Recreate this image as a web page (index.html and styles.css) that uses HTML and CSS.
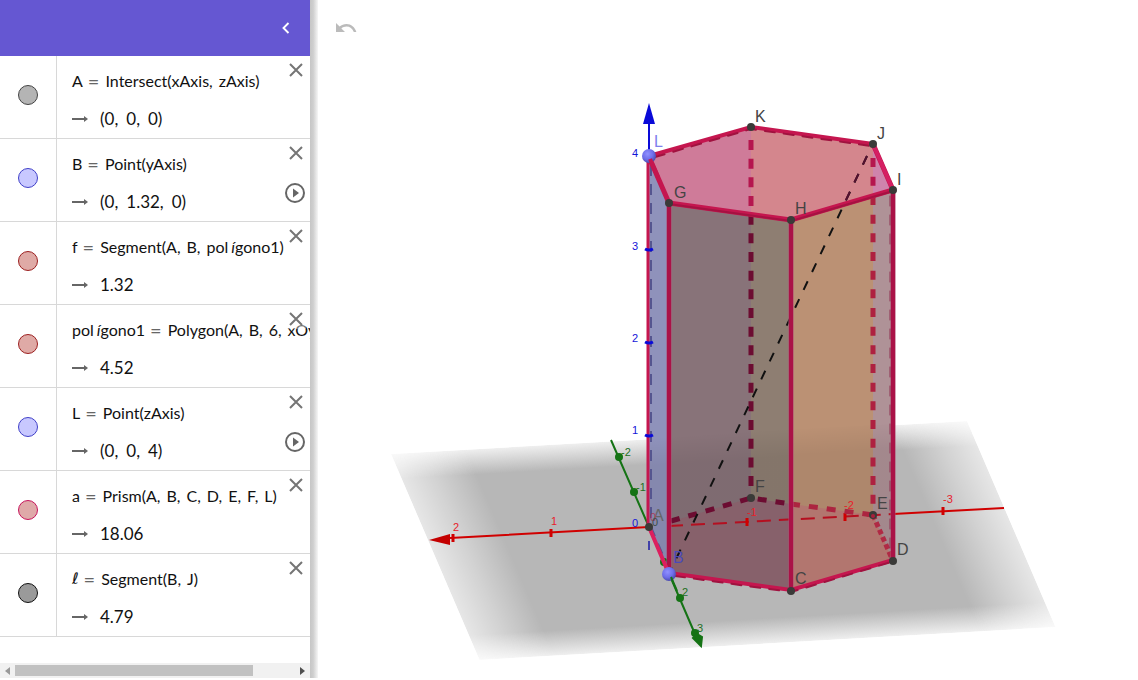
FILE: index.html
```html
<!DOCTYPE html>
<html lang="es">
<head>
<meta charset="utf-8">
<meta name="viewport" content="width=device-width, initial-scale=1">
<title>Prisma hexagonal</title>
<link rel="stylesheet" href="styles.css">
</head>
<body>
<svg class="symbols" aria-hidden="true">
  <symbol id="close" viewBox="0 0 14 14"><path d="M1 1l12 12M13 1L1 13" fill="none" stroke="#757575" stroke-width="2"/></symbol>
  <symbol id="play" viewBox="0 0 20 20"><circle cx="10" cy="10" r="9" fill="none" stroke="#666" stroke-width="2"/><path d="M8 5.500l6 4.500-6 4.500z" fill="#666"/></symbol>
  <symbol id="arrow" viewBox="0 0 16 8"><path d="M0 4h14" stroke="#666" stroke-width="2"/><path d="M12 1l4 3-4 3z" fill="#666"/></symbol>
</svg>
<div class="app">
  <aside class="panel">
    <header class="bar">
      <button class="collapse" aria-label="Cerrar panel"><svg width="8" height="12" viewBox="0 0 8 12"><path d="M6.500 1L1.500 6l5 5" fill="none" stroke="#fff" stroke-width="1.900"/></svg></button>
    </header>
    <ul class="list">
      <li class="row">
        <div class="side"><button class="marble gray" aria-label="A"></button></div>
        <div class="body">
          <div class="def"><span>A</span><span class="eq">=</span><span>Intersect(xAxis,</span><span class="arg">zAxis)</span></div>
          <div class="val"><svg class="arrow"><use href="#arrow"/></svg><span>(0,</span><span class="num">0,</span><span class="num">0)</span></div>
        </div>
        <button class="close" aria-label="Eliminar"><svg width="14" height="14"><use href="#close"/></svg></button>
      </li>
      <li class="row">
        <div class="side"><button class="marble blue" aria-label="B"></button></div>
        <div class="body">
          <div class="def"><span>B</span><span class="eq">=</span><span>Point(yAxis)</span></div>
          <div class="val"><svg class="arrow"><use href="#arrow"/></svg><span>(0,</span><span class="num">1.32,</span><span class="num">0)</span></div>
        </div>
        <button class="close" aria-label="Eliminar"><svg width="14" height="14"><use href="#close"/></svg></button>
        <button class="play" aria-label="Reproducir"><svg width="20" height="20"><use href="#play"/></svg></button>
      </li>
      <li class="row">
        <div class="side"><button class="marble red" aria-label="f"></button></div>
        <div class="body">
          <div class="def"><span>f</span><span class="eq">=</span><span>Segment(A,</span><span class="arg">B,</span><span class="arg">pol</span><i class="accent">í</i><span>gono1)</span></div>
          <div class="val"><svg class="arrow"><use href="#arrow"/></svg><span>1.32</span></div>
        </div>
        <button class="close" aria-label="Eliminar"><svg width="14" height="14"><use href="#close"/></svg></button>
      </li>
      <li class="row">
        <div class="side"><button class="marble red" aria-label="polígono1"></button></div>
        <div class="body">
          <div class="def"><span>pol</span><i class="accent">í</i><span>gono1</span><span class="eq">=</span><span>Polygon(A,</span><span class="arg">B,</span><span class="arg">6,</span><span class="arg">xOy</span></div>
          <div class="val"><svg class="arrow"><use href="#arrow"/></svg><span>4.52</span></div>
        </div>
        <button class="close" aria-label="Eliminar"><svg width="14" height="14"><use href="#close"/></svg></button>
      </li>
      <li class="row">
        <div class="side"><button class="marble blue" aria-label="L"></button></div>
        <div class="body">
          <div class="def"><span>L</span><span class="eq">=</span><span>Point(zAxis)</span></div>
          <div class="val"><svg class="arrow"><use href="#arrow"/></svg><span>(0,</span><span class="num">0,</span><span class="num">4)</span></div>
        </div>
        <button class="close" aria-label="Eliminar"><svg width="14" height="14"><use href="#close"/></svg></button>
        <button class="play" aria-label="Reproducir"><svg width="20" height="20"><use href="#play"/></svg></button>
      </li>
      <li class="row">
        <div class="side"><button class="marble pink" aria-label="a"></button></div>
        <div class="body">
          <div class="def"><span>a</span><span class="eq">=</span><span>Prism(A,</span><span class="arg">B,</span><span class="arg">C,</span><span class="arg">D,</span><span class="arg">E,</span><span class="arg">F,</span><span class="arg">L)</span></div>
          <div class="val"><svg class="arrow"><use href="#arrow"/></svg><span>18.06</span></div>
        </div>
        <button class="close" aria-label="Eliminar"><svg width="14" height="14"><use href="#close"/></svg></button>
      </li>
      <li class="row">
        <div class="side"><button class="marble dark" aria-label="ℓ"></button></div>
        <div class="body">
          <div class="def"><span class="ell">ℓ</span><span class="eq">=</span><span>Segment(B,</span><span class="arg">J)</span></div>
          <div class="val"><svg class="arrow"><use href="#arrow"/></svg><span>4.79</span></div>
        </div>
        <button class="close" aria-label="Eliminar"><svg width="14" height="14"><use href="#close"/></svg></button>
      </li>
    </ul>
    <div class="scroll">
      <button class="step" aria-label="Izquierda"><svg width="5" height="8" viewBox="0 0 5 8"><path d="M5 0v8L0 4z" fill="#999"/></svg></button>
      <div class="track"><div class="thumb"></div></div>
      <button class="step" aria-label="Derecha"><svg width="5" height="8" viewBox="0 0 5 8"><path d="M0 0v8l5-4z" fill="#505050"/></svg></button>
    </div>
  </aside>
  <div class="divider"></div>
  <main class="view">
    <button class="undo" aria-label="Deshacer"><svg width="24" height="24" viewBox="0 0 24 24"><path d="M12.500 8c-2.650 0-5.050.990-6.900 2.600L2 7v9h9l-3.620-3.620c1.390-1.160 3.160-1.880 5.120-1.880 3.300 0 6.100 2 7.300 5.500h2.600C20.900 11.030 17.150 8 12.500 8z" fill="#bbb"/></svg></button>
    <svg class="scene" viewBox="318 0 820 680" preserveAspectRatio="xMinYMin meet" role="img" aria-label="Prisma hexagonal en 3D">
      <defs>
        <linearGradient id="fx"><stop offset="0" stop-color="#fff" stop-opacity=".34"/><stop offset=".06" stop-color="#fff" stop-opacity=".63"/><stop offset=".13" stop-color="#fff"/><stop offset=".87" stop-color="#fff"/><stop offset=".94" stop-color="#fff" stop-opacity=".63"/><stop offset="1" stop-color="#fff" stop-opacity=".34"/></linearGradient>
        <linearGradient id="fy" x2="0" y2="1"><stop offset="0" stop-color="#b7b7b7" stop-opacity=".22"/><stop offset=".12" stop-color="#b7b7b7"/><stop offset=".88" stop-color="#b7b7b7"/><stop offset="1" stop-color="#b7b7b7" stop-opacity=".22"/></linearGradient>
        <mask id="mx" maskContentUnits="objectBoundingBox"><rect width="1" height="1" fill="url(#fx)"/></mask>
        <linearGradient id="shade" gradientUnits="userSpaceOnUse" x1="700" y1="434" x2="702" y2="462"><stop offset="0" stop-color="#000" stop-opacity="0"/><stop offset="1" stop-color="#000" stop-opacity=".07"/></linearGradient>
        <radialGradient id="ball" cx=".4" cy=".35" r=".65"><stop offset="0" stop-color="#9090ff"/><stop offset=".6" stop-color="#6e6eea"/><stop offset="1" stop-color="#4c4cae"/></radialGradient>
      </defs>
      <g transform="matrix(576 -33 88.500 206 391 454)"><rect width="1" height="1" fill="url(#fy)" mask="url(#mx)"/></g>

      <g class="faces">
        <path d="M649 157l20 46v371l-20-47z" fill="#8f92bb"/>
        <path d="M669 203l82 11v371l-82-11z" fill="#887379"/>
        <path d="M751 214l40 6v371l-40-6z" fill="#8e7e72"/>
        <path d="M791 220l82-24v371l-82 24z" fill="#bb9174"/>
        <path d="M873 196l20-6v371l-20 6z" fill="#af9297"/>
        <path d="M649 437l244-13v137l-102 30-122-17-20-47z" fill="url(#shade)"/>
        <path d="M669 522l82-24 40 6v87l-122-17z" fill="#87616b"/>
        <path d="M791 504l82 11 20 46-102 30z" fill="#b2766f"/>
        <path d="M649 157l102-30v87l-82-11z" fill="#cf7b99"/>
        <path d="M751 127l122 17v52l-82 24-40-6z" fill="#d4868d"/>
        <path d="M873 144l20 46-20 6z" fill="#cf83ac"/>
      </g>

      <g class="red-axis">
        <path d="M450 538L649 527M893 514l111-6"/>
        <path d="M669 526L893 514" stroke="#b50f20" stroke-dasharray="14 8"/>
        <path d="M429 540l21-6v11z" fill="#c40000" stroke="none"/>
        <path d="M453 534v8M551 529v8M747 518v8M845 513v8M943 507v8" stroke-width="3"/>
      </g>
      <g class="green-axis">
        <path d="M611 440l38 87 49 114"/>
        <circle cx="619" cy="457" r="4"/><circle cx="634" cy="492" r="4"/><circle cx="664" cy="562" r="4"/><circle cx="680" cy="598" r="4"/><circle cx="695" cy="633" r="4"/>
        <path d="M693 638l4-4 5 3-1 9z"/>
      </g>

      <g fill="none">
        <path d="M751 140v72" stroke="#b5164e" stroke-width="5" stroke-dasharray="10 8.670"/>
        <path d="M751 214.670v280" stroke="#6c0c31" stroke-width="5" stroke-dasharray="10 8.670"/>
        <path d="M873 158v37" stroke="#b5164e" stroke-width="5" stroke-dasharray="9 9.670"/>
        <path d="M873 196v312" stroke="#ae2140" stroke-width="5" stroke-dasharray="9 9.670"/>
        <path d="M671 521l80-23 40 6" stroke="#6c0c31" stroke-width="5" stroke-dasharray="9 9"/>
        <path d="M791 504l82 11" stroke="#ac2540" stroke-width="5" stroke-dasharray="9 9"/>
        <path d="M873 515l20 46" stroke="#b02a45" stroke-width="5" stroke-dasharray="5 3"/>
        <path d="M867 156L669 574" stroke="#111" stroke-width="2" stroke-dasharray="9.500 10.300"/>
        <path d="M867 156l-22 46" stroke="#551030" stroke-width="2" stroke-dasharray="9.500 10.300"/>
        <path d="M651 165v362l16 38" stroke="#55558f" stroke-width="2" stroke-dasharray="11 8"/>
      </g>

      <path d="M649 124v28" stroke="#0a0ad8" stroke-width="2"/>
      <path d="M649 103l6 21h-12z" fill="#0a0ad8"/>
      <path d="M649 541v9" stroke="#4141a8" stroke-width="2"/>

      <g class="edges">
        <path d="M648 157v370" stroke-width="3"/>
        <path d="M669 203v371M791 220v371M893 190v371" stroke="#b04a70" stroke-width="5"/>
        <path d="M669 203v371M791 220v371M893 190v371" stroke="#aa1247" stroke-width="4"/>
        <path d="M649 156l102-29 122 17" stroke-width="4"/>
        <path d="M655 157l96-28 120 17" stroke="#a0123f" stroke-width="2" stroke-dasharray="10 9"/>
        <path d="M669 573l122 17 102-30" stroke-width="4"/>
        <path d="M675 576l116 16 100-30" stroke="#a0123f" stroke-width="2" stroke-dasharray="10 9"/>
        <path d="M873 144l20 46-102 30-122-17-20-46" stroke-width="5"/>
        <path d="M873 144l20 46" stroke="#d51f63" stroke-width="4"/>
        <path d="M893 191l-102 30-122-17" stroke="#a51242" stroke-width="2"/>
        <path d="M649 527l20 47" stroke="#dc1f5e" stroke-width="4"/>
        <path d="M890 196v362" stroke="#8f3050" stroke-width="1" stroke-dasharray="10 9"/>
      </g>
      <path d="M645 249q4 2 8 0M645 342q4 2 8 0M645 435q4 2 8 0" fill="none" stroke="#0a0ad8" stroke-width="3"/>

      <g class="dots"><circle cx="751" cy="127" r="4"/><circle cx="873" cy="144" r="4"/><circle cx="893" cy="190" r="4"/><circle cx="791" cy="220" r="4"/><circle cx="669" cy="203" r="4"/><circle cx="751" cy="498" r="4"/><circle cx="893" cy="561" r="4"/><circle cx="791" cy="591" r="4"/><circle cx="649" cy="527" r="4"/><circle cx="873" cy="515" r="4"/></g>
      <circle cx="873" cy="516" r="2" fill="#a81f3c"/>
      <circle cx="649" cy="156" r="7" fill="url(#ball)"/>
      <path d="M650 159l8 18" stroke="#c5164f" stroke-width="4"/>
      <circle cx="669" cy="574" r="7" fill="url(#ball)"/>
      <path d="M671 577l6 14" stroke="#157315" stroke-width="2"/>

      <g class="names">
        <text x="755" y="122">K</text><text x="877" y="139">J</text><text x="897" y="185">I</text><text x="674" y="198">G</text><text x="795" y="214">H</text><text x="755" y="492">F</text><text x="877" y="509">E</text><text x="897" y="555">D</text><text x="795" y="584">C</text><text x="653" y="521" fill="#666">A</text>
        <text x="654" y="147" fill="#8080ee">L</text><text x="673" y="563" fill="#4a4ab8">B</text>
      </g>
      <g class="ticks" fill="#1414d8">
        <text x="632" y="157">4</text><text x="632" y="250">3</text><text x="632" y="342">2</text><text x="632" y="434">1</text><text x="632" y="527">0</text>
      </g>
      <g class="ticks" fill="#e8202a">
        <text x="453" y="531">2</text><text x="551" y="525">1</text><text x="747" y="516">-1</text><text x="844" y="509">-2</text><text x="943" y="503">-3</text><text x="650" y="521" fill="#a84060">0</text>
      </g>
      <g class="ticks" fill="#1e701e">
        <text x="621" y="456">-2</text><text x="636" y="491">-1</text><text x="652" y="526" fill="#40504a">0</text><text x="682" y="596">2</text><text x="697" y="632">3</text>
      </g>
    </svg>
  </main>
</div>
</body>
</html>
```

FILE: styles.css
```css
* { box-sizing: border-box; }
body { margin: 0; background: #fff; color: #111; font-family: Lato, "Liberation Sans", sans-serif; }
button { margin: 0; padding: 0; border: 0; background: none; display: flex; align-items: center; justify-content: center; cursor: pointer; }
.symbols { position: absolute; width: 0; height: 0; }
.app { display: flex; height: 100vh; padding-bottom: 2px; overflow: hidden; }
.panel { display: flex; flex-direction: column; flex: 0 0 310px; min-width: 0; }
.bar { display: flex; align-items: center; justify-content: flex-end; flex: none; height: 56px; padding-right: 12px; background: #6557d2; }
.collapse { width: 24px; height: 24px; }
.list { flex: 1; min-height: 0; margin: 0; padding: 0; list-style: none; overflow: hidden; }
.row { position: relative; display: flex; height: 83px; border-bottom: 1px solid #d8d8d8; }
.side { display: flex; justify-content: center; flex: 0 0 57px; padding-top: 29px; border-right: 1px solid #d8d8d8; }
.marble { width: 20px; height: 20px; border: 1px solid; border-radius: 50%; }
.gray { background: #b4b4b4; border-color: #444; }
.blue { background: #c8c8ff; border-color: #4040c8; }
.red { background: #dfaaa6; border-color: #9c2020; }
.pink { background: #dfa9a9; border-color: #c8145c; }
.dark { background: #9a9a9a; border-color: #111; }
.body { flex: 1; min-width: 0; padding: 10px 0 0 15px; overflow: hidden; font-size: 16px; line-height: 30px; white-space: nowrap; }
.def, .val { display: flex; align-items: center; }
.val { margin-top: 8px; font-size: 17px; }
.eq { margin: 0 6px 0 5px; color: #666; font-size: 20px; }
.arg { margin-left: 6px; }
.accent { margin-left: 3px; }
.num { margin-left: 8px; }
.ell { font-family: "DejaVu Sans", sans-serif; }
.arrow { width: 16px; height: 8px; margin-right: 12px; }
.close, .play { position: absolute; width: 20px; height: 20px; }
.close { top: 4px; right: 4px; background: rgba(255, 255, 255, .4); }
.play { top: 44px; right: 5px; }
.scroll { display: flex; flex: none; height: 15px; background: #f1f1f1; }
.step { width: 15px; height: 15px; }
.track { flex: 1; padding: 2px 0; }
.thumb { width: 85%; height: 11px; background: #c1c1c1; }
.divider { flex: 0 0 8px; background: linear-gradient(to right, #c6c6c6, #cfcfcf 40%, #f6f6f6); }
.view { position: relative; flex: 1; min-width: 0; }
.undo { position: absolute; top: 16px; left: 16px; }
.scene { display: block; width: 100%; aspect-ratio: 820 / 680; }
.red-axis { fill: none; stroke: #d00000; stroke-width: 2; }
.green-axis { fill: #157315; stroke: #157315; stroke-width: 2; }
.green-axis circle { stroke: none; }
.edges { fill: none; stroke: #c5164f; stroke-linecap: round; }
.dots { fill: #3a3a38; }
.names { fill: #444; font: 16px "Liberation Sans", sans-serif; }
.ticks { font: 11px "Liberation Sans", sans-serif; }
```
